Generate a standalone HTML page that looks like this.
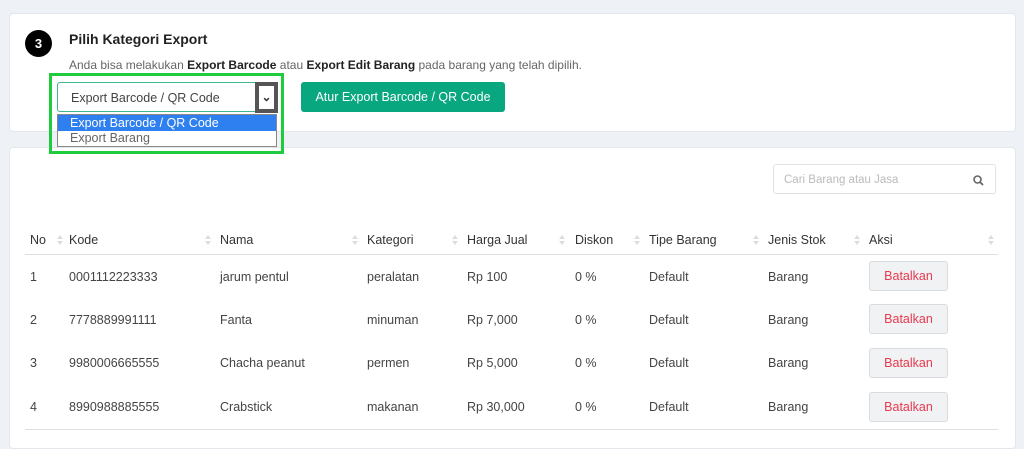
<!DOCTYPE html><html><head><style>
body{margin:0;width:1024px;height:437px;background:#eef1f5;font-family:"Liberation Sans",sans-serif;position:relative;overflow:hidden;color:#444;}
.card{position:absolute;left:9px;width:1005px;background:#fff;border:1px solid #e3e6ea;border-radius:4px;}
.a{position:absolute;white-space:nowrap}
.th{position:absolute;top:233px;font-size:12.5px;color:#333}
.td{position:absolute;font-size:12.5px;color:#444}
.sort{position:absolute;top:235px;width:6px;height:12px}
.sort:before{content:"";position:absolute;left:0;top:0;border:3px solid transparent;border-bottom:4px solid #ddd;border-top:0}
.sort:after{content:"";position:absolute;left:0;top:6px;border:3px solid transparent;border-top:4px solid #ddd;border-bottom:0}
.btn{position:absolute;left:869px;width:77px;height:28px;background:#f0f2f4;border:1px solid #d8dbdf;border-radius:3px;color:#e8394e;font-size:12.5px;text-align:center;line-height:28px}
</style></head><body>
<div class="card" style="top:13px;height:117px"></div>
<div class="card" style="top:147px;height:300px"></div>
<div class="a" style="left:25px;top:30px;width:27px;height:27px;border-radius:50%;background:#000;color:#fff;font-weight:bold;font-size:13px;text-align:center;line-height:27px">3</div>
<div class="a" style="left:69px;top:31px;font-size:14px;color:#222;font-weight:bold">Pilih Kategori Export</div>
<div class="a" style="left:69px;top:58px;font-size:12px;color:#666">Anda bisa melakukan <b style="color:#222">Export Barcode</b> atau <b style="color:#222">Export Edit Barang</b> pada barang yang telah dipilih.</div>
<div class="a" style="left:49px;top:73px;width:229px;height:75px;border:3px solid #1fcc3e"></div>
<div class="a" style="left:57px;top:82px;width:198px;height:30px;border:1px solid #3db58f;border-right:0;border-radius:3px 0 0 3px;background:#fff;font-size:12.5px;line-height:30px;padding-left:13px;box-sizing:border-box;color:#444">Export Barcode / QR Code</div>
<div class="a" style="left:255px;top:82px;width:23px;height:31px;background:#555;"><div style="position:absolute;left:4px;top:4px;width:15px;height:23px;background:#fff;text-align:center;font-size:12px;line-height:22px;font-weight:bold;color:#333">&#8964;</div></div>
<div class="a" style="left:57px;top:114px;width:218px;height:31px;border:1px solid #888;background:#fff;font-size:12.5px">
<div style="background:#2e7ff0;color:#fff;height:16px;line-height:16px;padding-left:12px">Export Barcode / QR Code</div>
<div style="color:#666;height:15px;line-height:14px;padding-left:12px">Export Barang</div></div>
<div class="a" style="left:301px;top:82px;width:204px;height:30px;background:#08a77f;border-radius:3px;color:#fff;font-size:12.5px;text-align:center;line-height:30px">Atur Export Barcode / QR Code</div>
<div class="a" style="left:773px;top:164px;width:223px;height:30px;border:1px solid #e0e3e6;border-radius:3px;font-size:11.5px;color:#bbb;line-height:30px;padding-left:10px;box-sizing:border-box">Cari Barang atau Jasa
<svg style="position:absolute;right:11px;top:10px" width="11" height="11" viewBox="0 0 11 11"><circle cx="4.5" cy="4.5" r="3.5" fill="none" stroke="#666" stroke-width="1.6"/><path d="M7 7l3 3" stroke="#666" stroke-width="1.8"/></svg></div>
<div class="th" style="left:30px">No</div><div class="th" style="left:69px">Kode</div><div class="th" style="left:220px">Nama</div><div class="th" style="left:367px">Kategori</div><div class="th" style="left:467px">Harga Jual</div><div class="th" style="left:575px">Diskon</div><div class="th" style="left:649px">Tipe Barang</div><div class="th" style="left:768px">Jenis Stok</div><div class="th" style="left:869px">Aksi</div>
<div class="sort" style="left:57px"></div><div class="sort" style="left:205px"></div><div class="sort" style="left:352px"></div><div class="sort" style="left:452px"></div><div class="sort" style="left:559px"></div><div class="sort" style="left:634px"></div><div class="sort" style="left:753px"></div><div class="sort" style="left:854px"></div><div class="sort" style="left:988px"></div>
<div class="a" style="left:25px;top:254px;width:973px;height:1px;background:#dcdfe3"></div>
<div class="a" style="left:25px;top:429px;width:973px;height:1px;background:#dcdfe3"></div>
<div class="td" style="left:30px;top:270px">1</div><div class="td" style="left:69px;top:270px">0001112223333</div><div class="td" style="left:220px;top:270px">jarum pentul</div><div class="td" style="left:367px;top:270px">peralatan</div><div class="td" style="left:467px;top:270px">Rp 100</div><div class="td" style="left:575px;top:270px">0 %</div><div class="td" style="left:649px;top:270px">Default</div><div class="td" style="left:768px;top:270px">Barang</div><div class="btn" style="top:261px">Batalkan</div>
<div class="td" style="left:30px;top:313px">2</div><div class="td" style="left:69px;top:313px">7778889991111</div><div class="td" style="left:220px;top:313px">Fanta</div><div class="td" style="left:367px;top:313px">minuman</div><div class="td" style="left:467px;top:313px">Rp 7,000</div><div class="td" style="left:575px;top:313px">0 %</div><div class="td" style="left:649px;top:313px">Default</div><div class="td" style="left:768px;top:313px">Barang</div><div class="btn" style="top:304px">Batalkan</div>
<div class="td" style="left:30px;top:356px">3</div><div class="td" style="left:69px;top:356px">9980006665555</div><div class="td" style="left:220px;top:356px">Chacha peanut</div><div class="td" style="left:367px;top:356px">permen</div><div class="td" style="left:467px;top:356px">Rp 5,000</div><div class="td" style="left:575px;top:356px">0 %</div><div class="td" style="left:649px;top:356px">Default</div><div class="td" style="left:768px;top:356px">Barang</div><div class="btn" style="top:348px">Batalkan</div>
<div class="td" style="left:30px;top:400px">4</div><div class="td" style="left:69px;top:400px">8990988885555</div><div class="td" style="left:220px;top:400px">Crabstick</div><div class="td" style="left:367px;top:400px">makanan</div><div class="td" style="left:467px;top:400px">Rp 30,000</div><div class="td" style="left:575px;top:400px">0 %</div><div class="td" style="left:649px;top:400px">Default</div><div class="td" style="left:768px;top:400px">Barang</div><div class="btn" style="top:392px">Batalkan</div>
</body></html>
